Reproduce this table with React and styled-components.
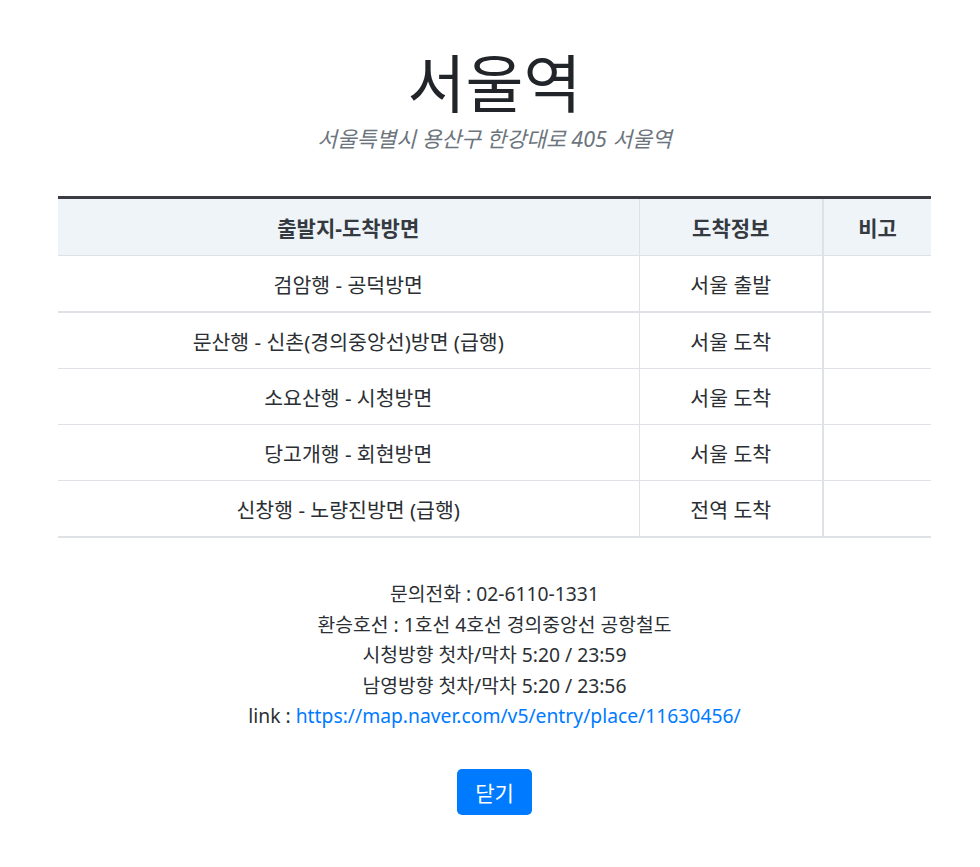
import React from 'react';
import styled, { createGlobalStyle } from 'styled-components';

const GlobalStyle = createGlobalStyle`
  body {
    margin: 0;
    background: #fff;
    color: #212529;
    font-family: "Noto Sans", "Noto Sans CJK KR", sans-serif;
  }
`;

const Page = styled.div`
  display: flex;
  flex-direction: column;
  align-items: center;
  padding: 47px 49px 40px 58px;
`;

const Title = styled.h1`
  margin: 0;
  font-size: 63px;
  font-weight: 400;
  line-height: 72px;
  color: #212529;
`;

const Address = styled.p`
  margin: 5px 0 0;
  font-size: 21.5px;
  line-height: 30px;
  font-style: italic;
  color: #6c757d;
`;

const Table = styled.table`
  width: 100%;
  margin-top: 42px;
  border-collapse: collapse;
  table-layout: fixed;
  border-top: 3px solid #3b3b44;
  border-bottom: 2px solid #dee2e6;
  font-size: 20.5px;
`;

const Head = styled.thead`
  border-bottom: 2px solid #dee2e6;
`;

const HeadCell = styled.th`
  height: 56px;
  padding: 0 12px;
  background: #eff4f9;
  font-size: 21px;
  font-weight: 700;
  color: #343a40;
  text-align: center;
  border-bottom: 1px solid #dee2e6;
  border-left: ${p => (p.$first ? 'none' : `${p.$thick ? 2 : 1}px solid #dee2e6`)};
`;

const Cell = styled.td`
  height: 55px;
  padding: 0 12px;
  text-align: center;
  color: #2b2f33;
  border-bottom: 1px solid #dee2e6;
  border-left: ${p => (p.$first ? 'none' : `${p.$thick ? 2 : 1}px solid #dee2e6`)};
`;

const Info = styled.div`
  margin-top: 41px;
  text-align: center;
  font-size: 19.3px;
  line-height: 30.6px;
  color: #2b2f33;
`;

const Link = styled.a`
  color: #007bff;
  text-decoration: none;
`;

const CloseButton = styled.button`
  margin-top: 37px;
  padding: 0 18px;
  height: 46px;
  border: none;
  border-radius: 5px;
  background: #007bff;
  color: #fff;
  font-family: inherit;
  font-size: 21px;
  cursor: pointer;
`;

const rows = [
  ['검암행 - 공덕방면', '서울 출발'],
  ['문산행 - 신촌(경의중앙선)방면 (급행)', '서울 도착'],
  ['소요산행 - 시청방면', '서울 도착'],
  ['당고개행 - 회현방면', '서울 도착'],
  ['신창행 - 노량진방면 (급행)', '전역 도착'],
];

function Row({ route, arrival }) {
  return (
    <tr>
      <Cell $first>{route}</Cell>
      <Cell>{arrival}</Cell>
      <Cell $thick></Cell>
    </tr>
  );
}

export default function App() {
  const [first, ...rest] = rows;
  return (
    <>
      <GlobalStyle />
      <Page>
        <Title>서울역</Title>
        <Address>서울특별시 용산구 한강대로 405 서울역</Address>
        <Table>
          <colgroup>
            <col style={{ width: '581px' }} />
            <col style={{ width: '184px' }} />
            <col />
          </colgroup>
          <Head>
            <tr>
              <HeadCell $first>출발지-도착방면</HeadCell>
              <HeadCell>도착정보</HeadCell>
              <HeadCell $thick>비고</HeadCell>
            </tr>
            <Row route={first[0]} arrival={first[1]} />
          </Head>
          <tbody>
            {rest.map(([route, arrival]) => (
              <Row key={route} route={route} arrival={arrival} />
            ))}
          </tbody>
        </Table>
        <Info>
          <div>문의전화 : 02-6110-1331</div>
          <div>환승호선 : 1호선 4호선 경의중앙선 공항철도</div>
          <div>시청방향 첫차/막차 5:20 / 23:59</div>
          <div>남영방향 첫차/막차 5:20 / 23:56</div>
          <div>
            link : <Link href="#">https://map.naver.com/v5/entry/place/11630456/</Link>
          </div>
        </Info>
        <CloseButton>닫기</CloseButton>
      </Page>
    </>
  );
}
